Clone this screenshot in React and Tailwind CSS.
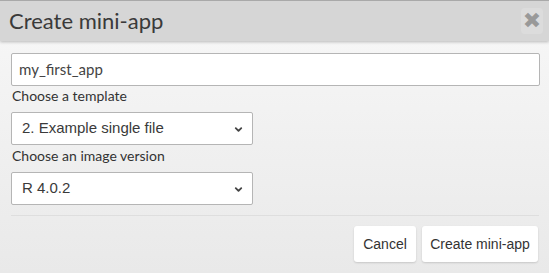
import { ChevronDown } from 'lucide-react'

const lato = { fontFamily: 'Lato, "Open Sans", sans-serif' }

function Select({ value }) {
  return (
    <div className="relative w-[242px] h-[33px] bg-white border border-[#b5b5b5] rounded-[2px] flex items-center pl-[10px] text-[15px] text-[#3a3a3a] font-['Liberation_Sans',Arial,sans-serif]">
      {value}
      <ChevronDown className="absolute right-[8px] top-[11px] w-[11px] h-[11px] text-[#444]" strokeWidth={4} />
    </div>
  )
}

export default function App() {
  return (
    <div className="w-[549px] h-[273px] overflow-hidden flex flex-col bg-gradient-to-b from-[#f8f8f8] to-[#e9e9e9]" style={lato}>
      {/* header */}
      <div className="h-[41px] shrink-0 bg-[#d6d6d6] border-t border-[#a9a9a9] shadow-[0_1px_3px_rgba(0,0,0,0.25)] flex items-center justify-between pl-[9px] pr-[6px] relative z-10">
        <span className="text-[22px] text-[#3a3a3a] leading-none" style={lato}>Create mini-app</span>
        <div className="w-[22px] h-[26px] rounded-[4px] bg-[#dcdcdc] flex items-center justify-center text-[#999] font-bold text-[22px] leading-none font-['DejaVu_Sans',sans-serif]">
          ✖
        </div>
      </div>

      {/* body */}
      <div className="flex flex-col pl-[11px] pr-[9px] pt-[12px]">
        <div className="h-[33px] bg-white border border-[#b5b5b5] rounded-[2px] flex items-center pl-[7px] text-[15px] text-[#444]">
          my_first_app
        </div>
        <label className="text-[14px] text-[#333] mt-0 leading-[20px] pl-[1px]">Choose a template</label>
        <div className="mt-[6px]">
          <Select value="2. Example single file" />
        </div>
        <label className="text-[14px] text-[#333] mt-[1px] leading-[20px] pl-[1px]">Choose an image version</label>
        <div className="mt-[6px]">
          <Select value="R 4.0.2" />
        </div>
        <div className="mt-[10px] h-px bg-[#dedede] mr-[1px]" />
        <div className="flex justify-end gap-[6px] mt-[10px] pr-[2px] font-['Liberation_Sans',Arial,sans-serif]">
          <button className="w-[62px] h-[36px] bg-white rounded-[3px] shadow-[0_1px_2px_rgba(0,0,0,0.15)] text-[14px] text-[#333]">
            Cancel
          </button>
          <button className="w-[116px] h-[36px] bg-white rounded-[3px] shadow-[0_1px_2px_rgba(0,0,0,0.15)] text-[14px] text-[#333]">
            Create mini-app
          </button>
        </div>
      </div>
    </div>
  )
}
